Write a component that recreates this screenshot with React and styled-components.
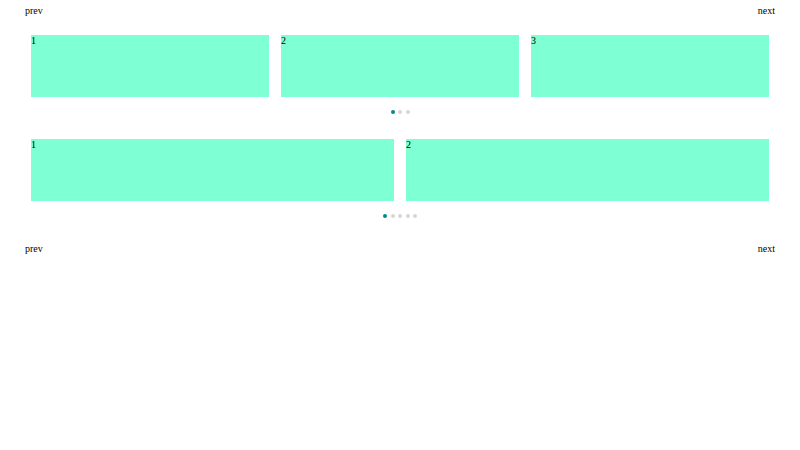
import React from "react";
import styled, { createGlobalStyle } from "styled-components";

const GlobalStyle = createGlobalStyle`
  body {
    margin: 0;
    background: #fff;
    font-family: "Liberation Serif", "Times New Roman", serif;
    color: #000;
  }
`;

const Page = styled.div`
  padding: 0 25px;
`;

const Nav = styled.div`
  display: flex;
  justify-content: space-between;
  align-items: center;
  height: 20px;
  font-size: 10px;
  margin-top: ${props => props.top || 0}px;
`;

const Track = styled.div`
  display: flex;
  margin-top: ${props => props.top}px;
`;

const Slide = styled.div`
  flex: 0 0 ${props => 100 / props.perView}%;
  box-sizing: border-box;
  padding: 0 6px;
`;

const SlideBox = styled.div`
  height: 62px;
  background: aquamarine;
  font-size: 10px;
  line-height: 12px;
`;

const Dots = styled.div`
  display: flex;
  justify-content: center;
  gap: 3.5px;
  margin-top: 13px;
`;

const Dot = styled.span`
  width: 4px;
  height: 4px;
  border-radius: 50%;
  background: ${props => (props.active ? "#008b8b" : "#d6d6d6")};
`;

const Carousel = ({ slides, perView, pages, top }) => (
  <>
    <Track top={top}>
      {slides.map(n => (
        <Slide key={n} perView={perView}>
          <SlideBox>{n}</SlideBox>
        </Slide>
      ))}
    </Track>
    <Dots>
      {Array.from({ length: pages }).map((_, i) => (
        <Dot key={i} active={i === 0} />
      ))}
    </Dots>
  </>
);

const App = () => (
  <Page>
    <GlobalStyle />
    <Nav>
      <span>prev</span>
      <span>next</span>
    </Nav>
    <Carousel slides={[1, 2, 3]} perView={3} pages={3} top={15} />
    <Carousel slides={[1, 2]} perView={2} pages={5} top={25} />
    <Nav top={20}>
      <span>prev</span>
      <span>next</span>
    </Nav>
  </Page>
);

export default App;
